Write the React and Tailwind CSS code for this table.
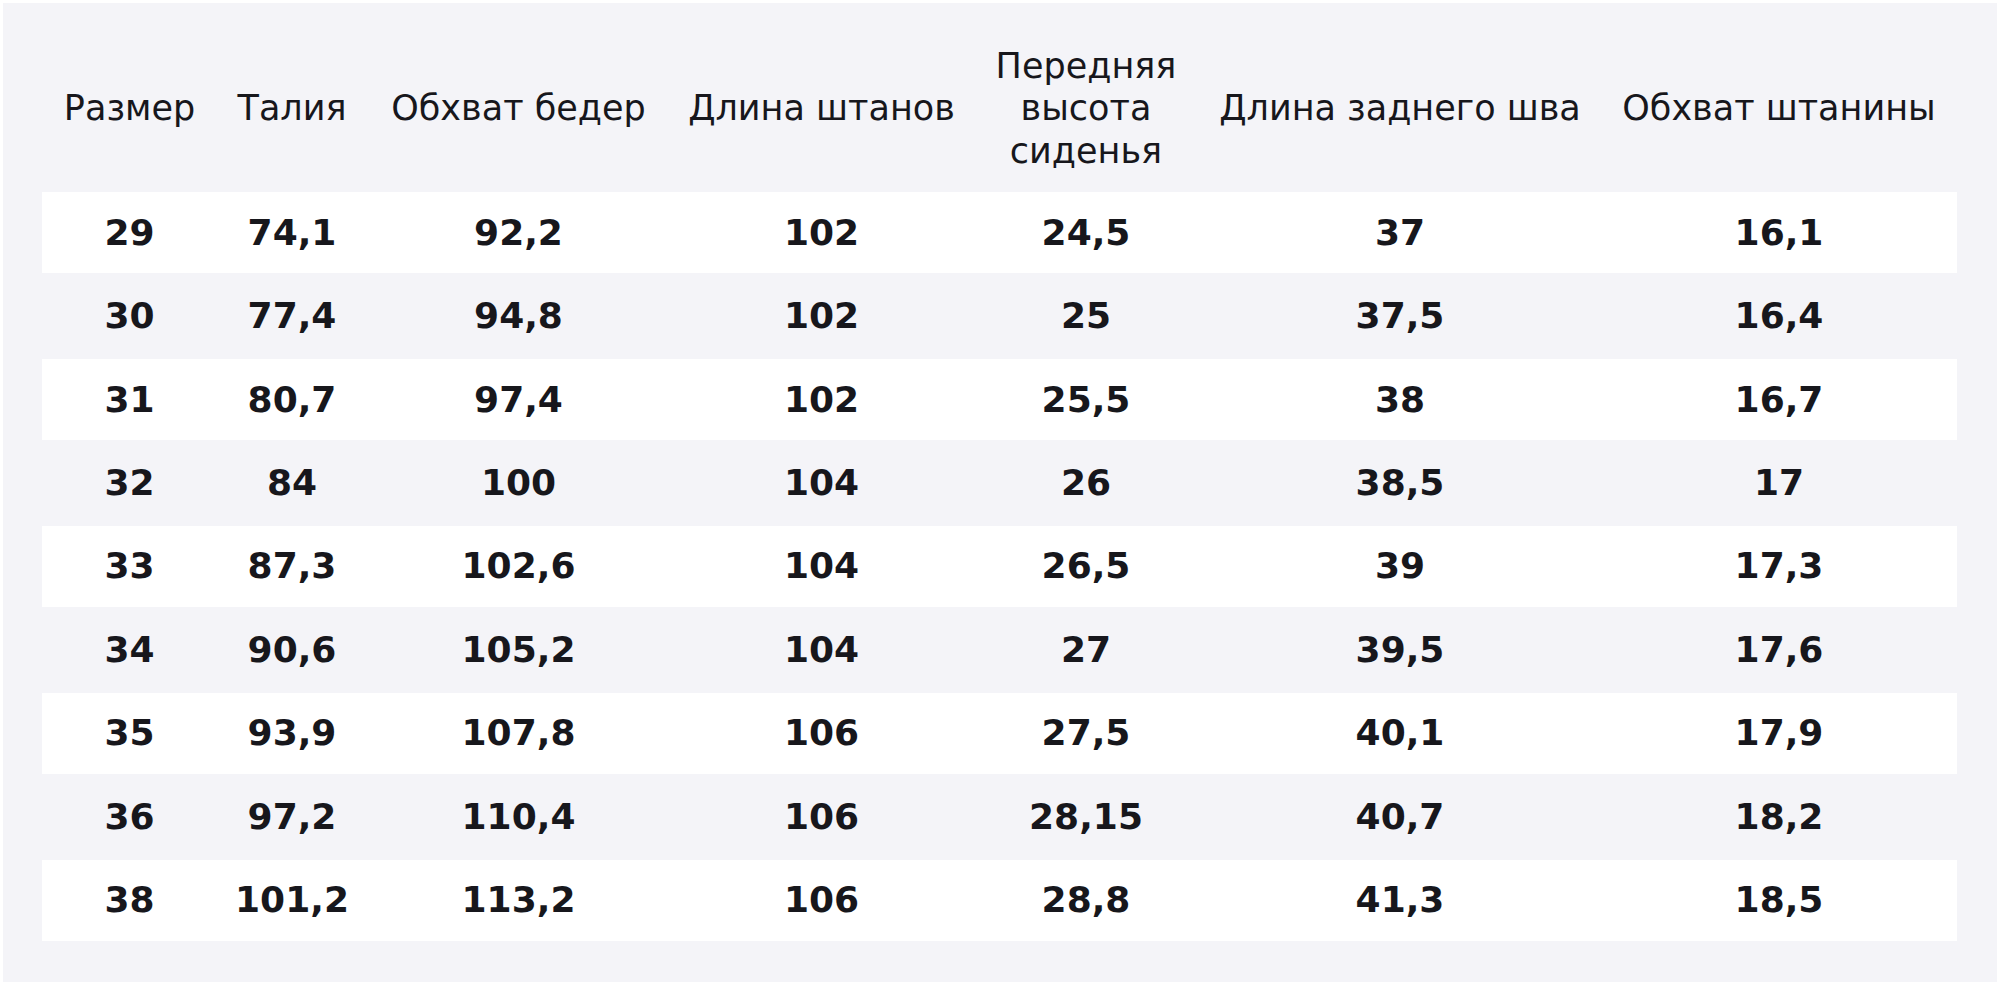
const HEADERS = [
  ['Размер'],
  ['Талия'],
  ['Обхват бедер'],
  ['Длина штанов'],
  ['Передняя', 'высота', 'сиденья'],
  ['Длина заднего шва'],
  ['Обхват штанины'],
]

const ROWS = [
  ['29', '74,1', '92,2', '102', '24,5', '37', '16,1'],
  ['30', '77,4', '94,8', '102', '25', '37,5', '16,4'],
  ['31', '80,7', '97,4', '102', '25,5', '38', '16,7'],
  ['32', '84', '100', '104', '26', '38,5', '17'],
  ['33', '87,3', '102,6', '104', '26,5', '39', '17,3'],
  ['34', '90,6', '105,2', '104', '27', '39,5', '17,6'],
  ['35', '93,9', '107,8', '106', '27,5', '40,1', '17,9'],
  ['36', '97,2', '110,4', '106', '28,15', '40,7', '18,2'],
  ['38', '101,2', '113,2', '106', '28,8', '41,3', '18,5'],
]

// column widths measured off the reference so the centres line up
const COLS = 'grid grid-cols-[175px_150px_303px_303px_226px_402px_356px]'

export default function App() {
  return (
    <div className="bg-white p-[3px] font-['DejaVu_Sans',sans-serif] text-[#17171c]">
      <div className="bg-[#f4f4f8] pt-[21px] pb-[41px] pl-[39px] pr-[40px]">
        <div className="flex flex-col gap-[2.4px]">
          {/* header */}
          <div className={COLS + ' h-[166px] pt-[3px] items-center text-[35px] leading-[42.5px]'}>
            {HEADERS.map((lines, i) => (
              <div key={i} className="text-center whitespace-nowrap">
                {lines.map((l, j) => (
                  <div key={j}>{l}</div>
                ))}
              </div>
            ))}
          </div>

          {/* body */}
          {ROWS.map((row, r) => (
            <div
              key={r}
              className={
                COLS +
                ' h-[81px] items-center text-[36px] font-bold ' +
                (r % 2 === 0 ? 'bg-white' : 'bg-transparent')
              }
            >
              {row.map((v, c) => (
                <div key={c} className="text-center">{v}</div>
              ))}
            </div>
          ))}
        </div>
      </div>
    </div>
  )
}
